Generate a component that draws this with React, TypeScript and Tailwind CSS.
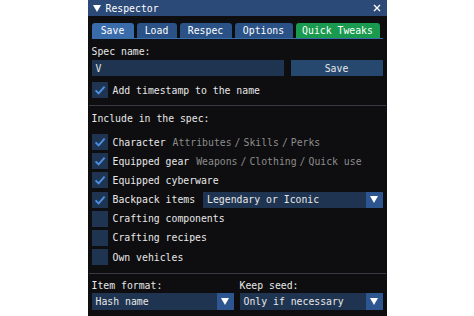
import React from 'react';

const font = { fontFamily: '"DejaVu Sans Mono", "Liberation Mono", monospace' };

function Check({ on }: { on?: boolean }) {
  return (
    <div className="flex h-4 w-4 shrink-0 items-center justify-center bg-[#1f3450]">
      {on && (
        <svg width="12" height="12" viewBox="0 0 12 12">
          <path d="M1.6 6.4 L4.6 9.4 L10.6 2.6" fill="none" stroke="#4a8fe3" strokeWidth="2" />
        </svg>
      )}
    </div>
  );
}

function Arrow() {
  return (
    <div className="flex h-full w-[17px] shrink-0 items-center justify-center bg-[#2d5590]">
      <svg width="8" height="7" viewBox="0 0 8 7">
        <path d="M0 0 H8 L4 7 Z" fill="#ffffff" />
      </svg>
    </div>
  );
}

function Combo({ value, className }: { value: string; className?: string }) {
  return (
    <div className={`flex items-center bg-[#1f3450] ${className ?? ''}`}>
      <span className="flex-1 pl-1 text-[#e8e8e8]">{value}</span>
      <Arrow />
    </div>
  );
}

const tabs = [
  { label: 'Save', w: 'w-[42px]', bg: 'bg-[#3a6cab]' },
  { label: 'Load', w: 'w-[40px]', bg: 'bg-[#2a5286]' },
  { label: 'Respec', w: 'w-[52px]', bg: 'bg-[#2a5286]' },
  { label: 'Options', w: 'w-[58px]', bg: 'bg-[#2a5286]' },
  { label: 'Quick Tweaks', w: 'w-[84px]', bg: 'bg-[#199a4e]' },
];

const rows = [
  { label: 'Character', on: true, extra: ['Attributes', 'Skills', 'Perks'] },
  { label: 'Equipped gear', on: true, extra: ['Weapons', 'Clothing', 'Quick use'] },
  { label: 'Equipped cyberware', on: true },
  { label: 'Backpack items', on: true, combo: 'Legendary or Iconic' },
  { label: 'Crafting components' },
  { label: 'Crafting recipes' },
  { label: 'Own vehicles' },
];

export default function App() {
  return (
    <div className="h-[316px] w-full overflow-hidden bg-white text-[9.8px] leading-[13px]" style={font}>
      <div className="mx-auto flex h-full w-[299px] flex-col bg-[#0e0e10] text-[#e8e8e8]">
        {/* title bar */}
        <div className="flex h-4 items-center bg-[#2c4a78] pl-1 pr-[6px]">
          <svg width="8" height="7" viewBox="0 0 8 7" className="ml-[1px]">
            <path d="M0 0 H8 L4 7 Z" fill="#ffffff" />
          </svg>
          <span className="ml-[5px] flex-1 text-white">Respector</span>
          <svg width="8" height="8" viewBox="0 0 8 8">
            <path d="M1 1 L7 7 M7 1 L1 7" stroke="#ffffff" strokeWidth="1.4" />
          </svg>
        </div>

        <div className="flex flex-col px-1">
          {/* tabs */}
          <div className="mt-[7px] flex gap-[3px]">
            {tabs.map((t) => (
              <div
                key={t.label}
                className={`flex h-[15px] items-center justify-center rounded-t-[3px] text-white ${t.w} ${t.bg}`}
              >
                {t.label}
              </div>
            ))}
          </div>
          <div className="h-px bg-[#3a6cab]" />

          <div className="mt-[6px] h-[13px]">Spec name:</div>
          <div className="mt-[2px] flex h-4 gap-[7px]">
            <div className="flex flex-1 items-center bg-[#1f3450] pl-1">V</div>
            <div className="flex w-[92px] items-center justify-center bg-[#26486f]">Save</div>
          </div>
          <div className="mt-[6px] flex items-center gap-[5px]">
            <Check on />
            <span>Add timestamp to the name</span>
          </div>
        </div>

        <div className="mx-[1px] mt-[7px] h-px bg-[#3a3b42]" />

        <div className="flex flex-col px-1">
          <div className="mt-[6px] h-[13px]">Include in the spec:</div>
          <div className="mt-[9px] flex flex-col gap-[3.2px]">
            {rows.map((r) => (
              <div key={r.label} className="flex h-4 items-center gap-[5px]">
                <Check on={r.on} />
                <span className="whitespace-nowrap">{r.label}</span>
                {r.extra && (
                  <span className="ml-[2px] flex gap-[3px] whitespace-nowrap text-[#8c8c8c]">
                    {r.extra.map((e, i) => (
                      <React.Fragment key={e}>
                        {i > 0 && <span>/</span>}
                        <span>{e}</span>
                      </React.Fragment>
                    ))}
                  </span>
                )}
                {r.combo && <Combo value={r.combo} className="ml-[3px] h-4 flex-1" />}
              </div>
            ))}
          </div>
        </div>

        <div className="mx-[1px] mt-[8px] h-px bg-[#3a3b42]" />

        <div className="mt-[5px] flex gap-[6px] px-1">
          <div className="flex w-[142px] flex-col">
            <div className="h-[13px]">Item format:</div>
            <Combo value="Hash name" className="mt-[1px] h-[17px]" />
          </div>
          <div className="flex flex-1 flex-col">
            <div className="h-[13px]">Keep seed:</div>
            <Combo value="Only if necessary" className="mt-[1px] h-[17px]" />
          </div>
        </div>
      </div>
    </div>
  );
}
